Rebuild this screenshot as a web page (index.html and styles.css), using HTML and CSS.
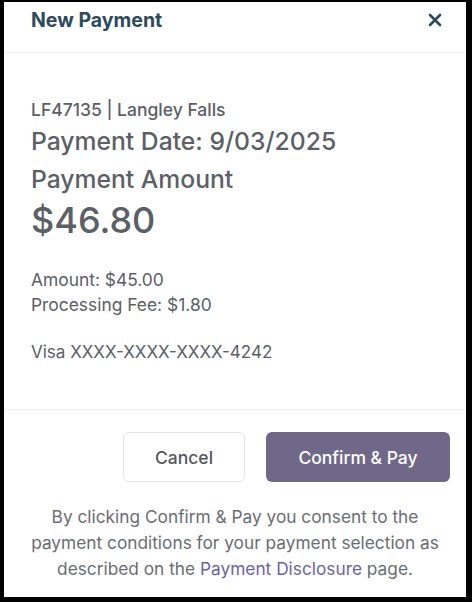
FILE: index.html
```html
<!DOCTYPE html>
<html lang="en">
<head>
    <meta charset="UTF-8">
    <title>New Payment</title>
    <link rel="stylesheet" href="styles.css">
</head>
<body>
<div class="modal">
    <!-- 标题栏 -->
    <div class="modal-head">
        <h2>New Payment</h2>
        <span class="close">
            <svg width="14" height="14" viewBox="0 0 14 14"><path d="M2 2L12 12M12 2L2 12" stroke="#2c4a5e" stroke-width="2.6" stroke-linecap="round"/></svg>
        </span>
    </div>
    <div class="modal-body">
        <p class="account">LF47135 | Langley Falls</p>
        <p class="big">Payment Date: 9/03/2025</p>
        <p class="big">Payment Amount</p>
        <p class="total">$46.80</p>
        <div class="detail">
            <p>Amount: $45.00</p>
            <p>Processing Fee: $1.80</p>
        </div>
        <p class="card">Visa XXXX-XXXX-XXXX-4242</p>
    </div>
    <div class="modal-foot">
        <div class="btns">
            <button class="cancel">Cancel</button>
            <button class="pay">Confirm &amp; Pay</button>
        </div>
        <p class="note">By clicking Confirm &amp; Pay you consent to the payment conditions for your payment selection as described on the <a href="#">Payment Disclosure</a> page.</p>
    </div>
</div>
</body>
</html>
```

FILE: styles.css
```css
* {
    margin: 0;
    padding: 0;
    box-sizing: border-box;
}
body {
    background-color: #000;
    font-family: Inter, Roboto, "Liberation Sans", sans-serif;
    padding: 2px 6px 5px 4px;
    height: 602px;
}
.modal {
    background-color: #fff;
    height: 595px;
    display: flex;
    flex-direction: column;
}
.modal-head {
    height: 51px;
    display: flex;
    align-items: center;
    justify-content: space-between;
    padding: 0 24px 0 27px;
    border-bottom: 1px solid #eeeff1;
}
.modal-head h2 {
    font-size: 19.5px;
    font-weight: 700;
    color: #2c4a5e;
    margin-top: -14px;
}
.close {
    display: flex;
    margin-top: -14px;
}
.modal-body {
    padding: 47px 27px 0;
    color: #5b6067;
    height: 357px;
    border-bottom: 1px solid #eeeff1;
}
.account {
    font-size: 17.5px;
    font-weight: 500;
    line-height: 20px;
}
.big {
    font-size: 24.7px;
    font-weight: 500;
    line-height: 34px;
    margin-top: 4px;
}
.total {
    font-size: 36px;
    font-weight: 500;
    line-height: 46px;
    margin-top: 1px;
}
.detail {
    margin-top: 24px;
    font-size: 17.4px;
    line-height: 25px;
}
.card {
    margin-top: 24px;
    font-size: 17px;
    line-height: 22px;
}
.modal-foot {
    padding: 22px 16px 0;
}
.btns {
    display: flex;
    justify-content: flex-end;
    gap: 21px;
}
.btns button {
    height: 50px;
    border-radius: 6px;
    font-family: inherit;
    font-size: 17.5px;
    font-weight: 500;
}
.cancel {
    width: 122px;
    background: #fff;
    border: 1px solid #e3e4e7;
    color: #54585f;
}
.pay {
    width: 184px;
    background: #6f6889;
    border: 0;
    color: #fff;
}
.note {
    margin-top: 22px;
    padding: 0 2px;
    text-align: center;
    font-size: 17.3px;
    line-height: 26px;
    color: #6a6d72;
}
.note a {
    color: #6a63a8;
    text-decoration: none;
}
```
